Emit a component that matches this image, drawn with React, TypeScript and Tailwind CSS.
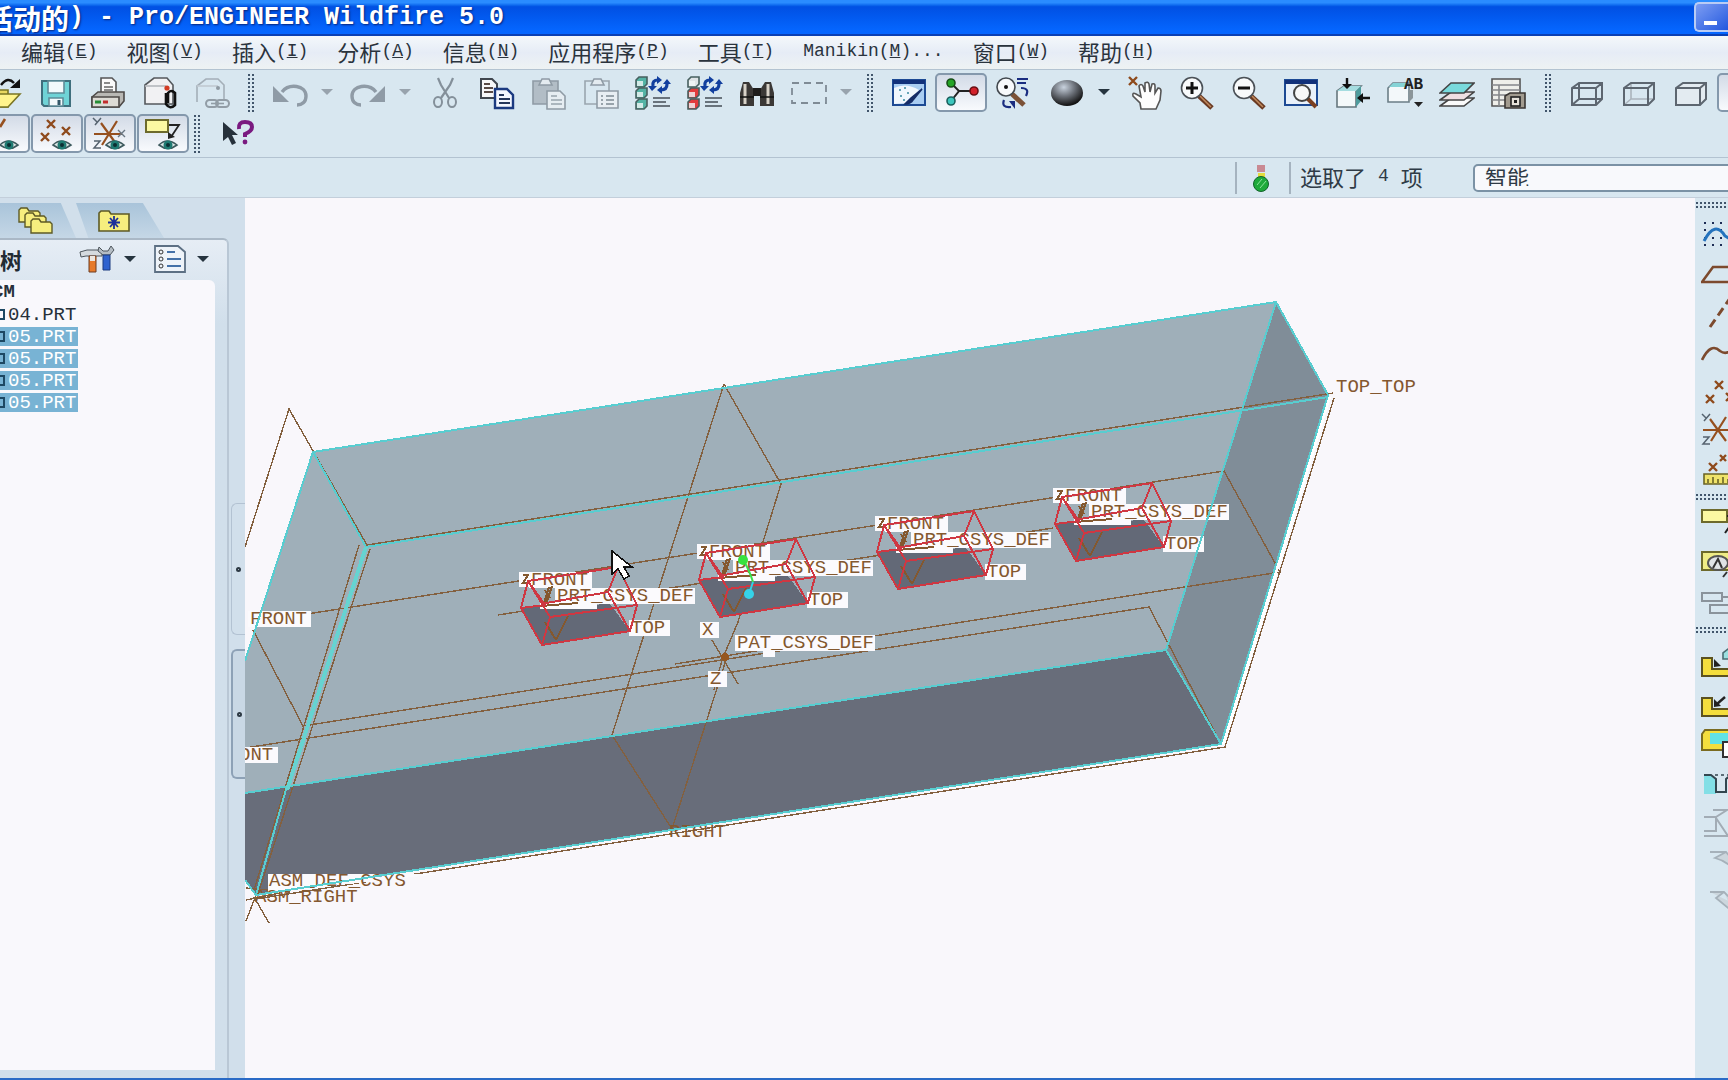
import React from 'react';

const MONO = "font-['Liberation_Mono','Noto_Sans_CJK_SC',monospace]";

/* ---------- shared pieces ---------- */

const Icon: React.FC<{ children: React.ReactNode }> = ({ children }) => (
    <svg viewBox="0 0 36 34" className="w-9 h-[34px] shrink-0" fill="none" strokeWidth="1.6">
        {children}
    </svg>
);

interface ToolProps {
    label: string;
    active?: boolean;
    children: React.ReactNode;
}

const Tool: React.FC<ToolProps> = ({ label, active, children }) => (
    <button
        type="button"
        aria-label={label}
        className={`w-[52px] h-[39px] shrink-0 flex items-center justify-center rounded-[5px] ${active
            ? 'border-2 border-[#8498ac] bg-gradient-to-b from-[#d3dbe7] to-[#f8fafd]'
            : ''
            }`}
    >
        {children}
    </button>
);

const Arrow: React.FC<{ label: string; dark?: boolean }> = ({ label, dark }) => (
    <button type="button" aria-label={label} className="w-[22px] h-[39px] shrink-0 flex items-center justify-center">
        <svg viewBox="0 0 12 7" className="w-3 h-[7px]">
            <path d="M0 0H12L6 6Z" fill={dark ? '#26343f' : '#98a3ad'} />
        </svg>
    </button>
);

const dots = 'bg-[radial-gradient(#41556b_1px,transparent_1px)] bg-[size:4px_4px]';

const Grip: React.FC = () => <div className={`w-2 h-[39px] shrink-0 ${dots}`} />;

const Eye: React.FC = () => (
    <g>
        <path d="M14 28Q22 20 32 28Q23 35 14 28Z" fill="#dce6e6" stroke="#3d5a5e" />
        <circle cx="23" cy="28" r="4.5" fill="#1f7a72" />
        <circle cx="23" cy="28" r="2" fill="#0c2f33" />
    </g>
);

const Cross: React.FC<{ x: number; y: number; r?: number }> = ({ x, y, r = 4 }) => (
    <path d={`M${x - r} ${y - r}l${2 * r} ${2 * r}M${x + r} ${y - r}l${-2 * r} ${2 * r}`} stroke="#8e4a1c" strokeWidth="2.4" />
);

const CsysMark: React.FC = () => (
    <g>
        <path d="M2 17H30M9 6L25 28M25 4L10 28" stroke="#96501f" strokeWidth="2.2" />
        <path d="M1 1L5 5M9 1L3 8M2 24H8L2 31H9" stroke="#56636f" strokeWidth="1.5" />
    </g>
);

const Cubes: React.FC<{ colors: string[] }> = ({ colors }) => (
    <g>
        {colors.map((color, i) => (
            <g key={i} transform={`translate(0 ${i * 11})`}>
                <path d="M1 4L4 1H12V8L9 11H1Z" fill={color} stroke="#47605f" />
                <path d="M2 5H8V10H2Z" fill="#f3f8f8" fillOpacity="0.8" />
            </g>
        ))}
        <path d="M18 10Q17 4 23 4M32 8Q32 14 26 14" stroke="#123f9e" strokeWidth="3.2" />
        <path d="M13 10H22L17 15ZM36 8H28L32 3ZM22 0L27 4L22 8ZM27 10L22 14L27 18Z" fill="#123f9e" />
        <path d="M18 22H35M18 26H31M18 30H35" stroke="#69737c" strokeWidth="1.8" />
    </g>
);

const Lens: React.FC<{ sign: string }> = ({ sign }) => (
    <g>
        <path d="M20 20L33 32" stroke="#6a3a22" strokeWidth="5" />
        <path d="M21 20L32 31" stroke="#c08a5e" strokeWidth="1.5" />
        <circle cx="13" cy="12" r="10.5" fill="#f8fafb" stroke="#4b5157" />
        <path d={sign} stroke="#111" strokeWidth="3" />
    </g>
);

/* ---------- menu ---------- */

const menus = [
    { name: '编辑', key: 'E' },
    { name: '视图', key: 'V' },
    { name: '插入', key: 'I' },
    { name: '分析', key: 'A' },
    { name: '信息', key: 'N' },
    { name: '应用程序', key: 'P' },
    { name: '工具', key: 'T' },
    { name: 'Manikin', key: 'M', tail: '...' },
    { name: '窗口', key: 'W' },
    { name: '帮助', key: 'H' },
];

const MenuBar: React.FC = () => (
    <nav className="h-[34px] pl-[21px] pb-1 flex items-center gap-[29px] whitespace-nowrap bg-gradient-to-b from-[#f4f8fb] via-[#e6ecf6] to-[#eef2f3] border-b border-[#b3c3d1] text-[#2a333d]">
        {menus.map(({ name, key, tail }) => (
            <button key={key} type="button" className="flex items-center leading-6">
                <span className={name === 'Manikin' ? `text-[18px] ${MONO}` : "text-[22px] font-['Noto_Sans_CJK_SC',sans-serif]"}>
                    {name}
                </span>
                <span className={`text-[18px] ${MONO}`}>
                    (<u>{key}</u>){tail}
                </span>
            </button>
        ))}
    </nav>
);

/* ---------- toolbars ---------- */

const FileTools: React.FC = () => (
    <>
        <Tool label="打开">
            <Icon>
                <path d="M0 14H22V31H0Z" fill="#e9d860" stroke="#7a7524" />
                <path d="M2 31L12 18H34L22 31Z" fill="#fff48c" stroke="#7a7524" />
                <path d="M15 9Q22 0 28 7" stroke="#111" strokeWidth="2.4" />
                <path d="M34 3V12H24Z" fill="#111" />
            </Icon>
        </Tool>
        <Tool label="保存">
            <Icon>
                <path d="M4 5H32V30H6L4 28Z" fill="#6fd3d6" stroke="#3f6f7d" strokeWidth="2" />
                <path d="M10 5H26V17H10ZM11 22H25V30H11Z" fill="#f3fafc" stroke="#5f8c98" />
                <path d="M21 24V29" stroke="#33596a" strokeWidth="3" />
            </Icon>
        </Tool>
        <Tool label="打印">
            <Icon>
                <path d="M11 17V2H22L26 6V17Z" fill="#fafafa" stroke="#555" />
                <path d="M14 7H20M14 11H23M14 14H23" stroke="#666" />
                <path d="M2 21L8 16H34V25L29 31H2Z" fill="#b9b8b4" stroke="#4d4947" />
                <path d="M2 21H29V31H2Z" fill="#dddbd5" stroke="#4d4947" />
                <path d="M5 26H11" stroke="#268c35" strokeWidth="3" />
                <path d="M13 26H18" stroke="#c22d2d" strokeWidth="3" />
            </Icon>
        </Tool>
        <Tool label="发送">
            <Icon>
                <path d="M3 28V9L12 2H25L31 9V28Z" fill="#f1f1f3" stroke="#54585c" />
                <path d="M3 10H24" stroke="#b4b8bc" />
                <circle cx="25" cy="12" r="2.6" fill="#d23b24" />
                <path d="M24 17V28Q28 34 33 29V17Q29 13 26 17V27" stroke="#111" strokeWidth="2.6" />
            </Icon>
        </Tool>
        <Tool label="发送链接">
            <Icon>
                <path d="M3 26V10L12 3H24L30 9V23" stroke="#a4afb8" />
                <path d="M3 10H24" stroke="#c1cad1" />
                <circle cx="24" cy="12" r="2" fill="#8f9aa3" />
                <rect x="12" y="24" width="12" height="7" rx="3.5" stroke="#929da6" strokeWidth="2" />
                <rect x="22" y="24" width="13" height="7" rx="3.5" stroke="#929da6" strokeWidth="2" />
                <path d="M17 27.500H30" stroke="#929da6" />
            </Icon>
        </Tool>
    </>
);

const EditTools: React.FC = () => (
    <>
        <Tool label="撤消">
            <Icon>
                <path d="M10 16C17 7 34 9 34 20C34 26 30 29 25 29" stroke="#8f9ba6" strokeWidth="3.4" />
                <path d="M1 10V26H17Z" fill="#8f9ba6" />
            </Icon>
        </Tool>
        <Arrow label="撤消列表" />
        <div className="w-1 shrink-0" />
        <Tool label="重做">
            <Icon>
                <path d="M26 16C19 7 2 9 2 20C2 26 6 29 11 29" stroke="#8f9ba6" strokeWidth="3.4" />
                <path d="M35 10V26H19Z" fill="#8f9ba6" />
            </Icon>
        </Tool>
        <Arrow label="重做列表" />
        <div className="w-[3px] shrink-0" />
        <Tool label="剪切">
            <Icon>
                <path d="M11 2L14 9L22 22M26 2L23 9L14 22" stroke="#84909a" strokeWidth="2.2" />
                <ellipse cx="11" cy="26" rx="4" ry="5" stroke="#84909a" strokeWidth="2" />
                <ellipse cx="25" cy="26" rx="4" ry="5" stroke="#84909a" strokeWidth="2" />
            </Icon>
        </Tool>
        <Tool label="复制">
            <Icon>
                <path d="M2 3H13L18 8V22H2Z" fill="#f7f7f8" stroke="#40464e" strokeWidth="2" />
                <path d="M5 8H11M5 12H14M5 16H14" stroke="#594a45" strokeWidth="2" />
                <path d="M16 13H28L34 19V32H16Z" fill="#f4f7ff" stroke="#1b3a80" strokeWidth="2.4" />
                <path d="M20 19H25M20 23H31M20 27H31" stroke="#26375c" strokeWidth="2" />
            </Icon>
        </Tool>
        <Tool label="粘贴">
            <Icon>
                <path d="M2 5H27V28H2Z" fill="#b2bdc6" stroke="#8f9ba5" />
                <path d="M8 9L11 3H18L21 9Z" fill="#e4ebf0" stroke="#8f9ba5" />
                <path d="M16 15H29L34 20V33H16Z" fill="#e6edf2" stroke="#8f9ba5" />
                <path d="M20 20H26M20 24H31M20 28H31" stroke="#98a4ad" />
            </Icon>
        </Tool>
        <Tool label="选择性粘贴">
            <Icon>
                <path d="M2 5H26V28H2Z" stroke="#9aa6af" />
                <path d="M8 9L11 3H18L21 9Z" fill="#e4ebf0" stroke="#8f9ba5" />
                <path d="M14 15H35V32H14Z" fill="#e8eef3" stroke="#8f9ba5" />
                <path d="M18 20H20M18 24H20M18 28H20M23 20H31M23 24H31M23 28H31" stroke="#7d8a94" />
            </Icon>
        </Tool>
        <Tool label="再生">
            <Icon>
                <Cubes colors={['#54b3a5', '#54b3a5', '#54b3a5']} />
            </Icon>
        </Tool>
        <Tool label="再生管理器">
            <Icon>
                <Cubes colors={['#dfe4e6', '#e33c3c', '#e33c3c']} />
            </Icon>
        </Tool>
        <Tool label="查找">
            <Icon>
                <path d="M4 6H10L15 14V30H1V17Z" fill="#3b3836" />
                <path d="M32 6H26L21 14V30H35V17Z" fill="#3b3836" />
                <path d="M14 12H22V20H14Z" fill="#1f1d1c" />
                <path d="M6 8V28M29 8V28" stroke="#d8d2c8" strokeWidth="3" />
                <path d="M1 21H15M21 21H35" stroke="#111" />
            </Icon>
        </Tool>
        <Tool label="选取框">
            <Icon>
                <rect x="1" y="7" width="34" height="20" stroke="#7f8b95" strokeWidth="1.8" strokeDasharray="7 5" />
            </Icon>
        </Tool>
        <Arrow label="选取选项" />
    </>
);

const ViewTools: React.FC = () => (
    <>
        <Tool label="重画">
            <Icon>
                <rect x="2" y="4" width="32" height="25" fill="#a9cdf2" stroke="#1d4a94" strokeWidth="2" />
                <path d="M2 4H34V8H2Z" fill="#12317a" />
                <path d="M3 12Q15 6 28 14L17 27L3 28Z" fill="#f1f7fd" />
                <path d="M31 13L20 22L14 28Q20 28 22 24Z" fill="#152c66" stroke="#152c66" />
                <path d="M8 14H10M13 12H15M9 20H11M16 17H18M12 24H14" stroke="#3a8ba0" />
            </Icon>
        </Tool>
        <Tool label="旋转中心" active>
            <Icon>
                <path d="M8 7L16 15L8 25M16 15H30" stroke="#222" strokeWidth="2" />
                <circle cx="8" cy="7" r="4" fill="#24a526" stroke="#174f18" />
                <circle cx="8" cy="25" r="4" fill="#3cc6bd" stroke="#1b5f5d" />
                <circle cx="31" cy="15" r="4" fill="#d3202a" stroke="#6b1014" />
            </Icon>
        </Tool>
        <Tool label="定向模式">
            <Icon>
                <path d="M17 18L29 29" stroke="#7b5136" strokeWidth="5" />
                <circle cx="11" cy="11" r="9" fill="#f7f9fb" stroke="#43494f" />
                <circle cx="11" cy="11" r="2" fill="#111" />
                <path d="M22 3H33M22 7H31M26 12Q35 12 31 20M9 24Q6 32 16 31" stroke="#1a2d80" strokeWidth="2.2" />
                <path d="M14 25H20V33Z" fill="#1a2d80" />
            </Icon>
        </Tool>
        <div className="w-[2px] shrink-0" />
        <Tool label="外观库">
            <Icon>
                <defs>
                    <radialGradient id="ball" cx="0.4" cy="0.28" r="0.7">
                        <stop offset="0" stopColor="#c9d3df" />
                        <stop offset="0.5" stopColor="#6b7078" />
                        <stop offset="1" stopColor="#141414" />
                    </radialGradient>
                </defs>
                <ellipse cx="18" cy="17" rx="16" ry="13" fill="url(#ball)" />
            </Icon>
        </Tool>
        <Arrow label="外观选项" dark />
        <div className="w-1 shrink-0" />
        <Tool label="平移">
            <Icon>
                <Cross x={6} y={5} />
                <path d="M14 33L13 27L6 20Q5 16 9 18L14 21L12 10Q14 7 16 10L18 16L18 7Q21 5 22 8L23 16L25 8Q28 7 28 10L28 17L31 12Q34 12 34 15L33 24L29 33Z" fill="#fdfdfd" stroke="#555" />
            </Icon>
        </Tool>
        <Tool label="放大">
            <Icon>
                <Lens sign="M7 12H19M13 6V18" />
            </Icon>
        </Tool>
        <Tool label="缩小">
            <Icon>
                <Lens sign="M7 12H19" />
            </Icon>
        </Tool>
        <Tool label="重新调整">
            <Icon>
                <rect x="2" y="4" width="32" height="25" fill="#e9f1fa" stroke="#1d4a94" strokeWidth="2" />
                <path d="M2 4H34V8H2Z" fill="#12317a" />
                <path d="M24 22L33 31" stroke="#7b4020" strokeWidth="4" />
                <circle cx="19" cy="17" r="8" fill="#f8f8f8" stroke="#444" strokeWidth="2" />
            </Icon>
        </Tool>
        <Tool label="重定向">
            <Icon>
                <path d="M2 15L9 10H26L21 15V31H2Z" fill="#f4f9fa" stroke="#66777d" />
                <path d="M2 15L9 10H26L21 15Z" fill="#a5dde0" />
                <path d="M21 15L26 10V25L21 31Z" fill="#4f9c9d" />
                <path d="M12 2V9M35 22H26" stroke="#111" strokeWidth="2.4" />
                <path d="M7 8H17L12 13ZM28 17V27L22 22Z" fill="#111" />
            </Icon>
        </Tool>
        <Tool label="已命名视图">
            <Icon>
                <path d="M1 12L6 7H22V26H1Z" fill="#f3f8fa" stroke="#6b7e87" />
                <path d="M2 11L6 7H19V11Z" fill="#85d3d6" />
                <path d="M22 14H26V22L22 26Z" fill="#8a9599" />
                <text x="17" y="13" fontSize="16" fontWeight="bold" fill="#222" className={MONO}>AB</text>
                <path d="M27 26H36L31.500 31Z" fill="#222" />
            </Icon>
        </Tool>
        <Tool label="层">
            <Icon>
                <path d="M1 30L12 22H35L25 30Z" fill="#fafafa" stroke="#444" />
                <path d="M1 24L12 16H35L25 24Z" fill="#efe0e2" stroke="#444" />
                <path d="M1 17L12 7H35L25 17Z" fill="#79dadc" stroke="#444" />
            </Icon>
        </Tool>
        <Tool label="视图管理器">
            <Icon>
                <path d="M1 3H29V30H1Z" fill="#efefea" stroke="#555" />
                <path d="M1 9H29M1 14H29M1 19H29M1 24H20M8 9V30" stroke="#85878a" />
                <path d="M14 20L19 17H34V32H14Z" fill="#a29b8f" stroke="#3a3633" />
                <rect x="20" y="21" width="9" height="9" fill="#e6e2da" stroke="#222" />
                <rect x="23" y="24" width="3" height="3" fill="#222" />
            </Icon>
        </Tool>
    </>
);

const DisplayTools: React.FC = () => (
    <>
        <Tool label="线框">
            <Icon>
                <path d="M3 12L10 7H33V23L27 29H3ZM3 12H27V29M27 12L33 7M10 7V23H33M10 23L3 29" stroke="#5d6670" strokeWidth="2" />
            </Icon>
        </Tool>
        <Tool label="隐藏线">
            <Icon>
                <path d="M10 7V23H33M10 23L3 29" stroke="#abb4bc" />
                <path d="M3 12L10 7H33V23L27 29H3ZM3 12H27V29M27 12L33 7" stroke="#5d6670" strokeWidth="2" />
            </Icon>
        </Tool>
        <Tool label="消隐">
            <Icon>
                <path d="M3 12L10 7H33V23L27 29H3ZM3 12H27V29M27 12L33 7" fill="#e3ebf1" stroke="#5d6670" strokeWidth="2" />
            </Icon>
        </Tool>
        <Tool label="着色" active>
            <Icon>
                <path d="M3 12L10 7H33V23L27 30H3Z" fill="#8c9aa8" />
            </Icon>
        </Tool>
    </>
);

const Toolbars: React.FC = () => (
    <div className="h-[88px] pt-[3px] border-b border-[#b3c3d1] flex flex-col gap-[2px]">
        <div className="flex -ml-[22px]">
            <FileTools />
            <div className="w-[22px] shrink-0 flex justify-center pl-1"><Grip /></div>
            <div className="w-1 shrink-0" />
            <EditTools />
            <div className="w-[26px] shrink-0 flex justify-center"><Grip /></div>
            <ViewTools />
            <div className="w-[26px] shrink-0 flex justify-center"><Grip /></div>
            <DisplayTools />
        </div>
        <div className="flex gap-px -ml-[22px]">
            <Tool label="基准轴显示" active>
                <Icon>
                    <path d="M19 2L14 10M12 14L8 21" stroke="#96501f" strokeWidth="2.6" />
                    <Eye />
                </Icon>
            </Tool>
            <Tool label="基准点显示" active>
                <Icon>
                    <Cross x={12} y={7} />
                    <Cross x={27} y={14} />
                    <Cross x={6} y={20} />
                    <Eye />
                </Icon>
            </Tool>
            <Tool label="坐标系显示" active>
                <Icon>
                    <CsysMark />
                    <path d="M26 13L33 20M33 13L26 20" stroke="#697682" strokeWidth="1.4" />
                    <Eye />
                </Icon>
            </Tool>
            <Tool label="注释显示" active>
                <Icon>
                    <rect x="1" y="3" width="22" height="12" fill="#fbf8a2" stroke="#6d6a2c" strokeWidth="2" />
                    <path d="M24 8H34L26 20" stroke="#222" strokeWidth="1.8" />
                    <path d="M23 22V15L30 20Z" fill="#222" />
                    <Eye />
                </Icon>
            </Tool>
            <div className="w-[11px] shrink-0 flex justify-end"><Grip /></div>
            <div className="w-2 shrink-0" />
            <Tool label="帮助">
                <Icon>
                    <path d="M4 5V24L9 20L13 28L17 26L13 18H19Z" fill="#26313b" />
                    <path d="M20 12Q19 5 26 5Q33 5 33 10Q33 14 26 17V20" stroke="#7a1a80" strokeWidth="4" />
                    <circle cx="26" cy="25" r="2.4" fill="#7a1a80" />
                </Icon>
            </Tool>
        </div>
    </div>
);

const StatusBar: React.FC = () => (
    <div className="h-10 border-b border-[#c3cfdb] flex justify-end items-center text-[#2f3b46] text-[22px] leading-6">
        <div className="w-[54px] h-8 shrink-0 border-l-2 border-[#a5b3bf] pr-1 flex items-center justify-center">
            <svg viewBox="0 0 18 28" className="w-[18px] h-7">
                <rect x="5" y="1" width="8" height="7" fill="#c98a93" />
                <rect x="6" y="9" width="7" height="5" fill="#e5dc3f" />
                <circle cx="9" cy="20" r="7.500" fill="#1faa3a" stroke="#12632a" />
                <path d="M5 21L10 15M8 24L14 17" stroke="#8be39a" />
            </svg>
        </div>
        <p className="w-[184px] h-8 shrink-0 border-l-2 border-[#a5b3bf] pl-[9px] pb-1 flex items-center gap-3 whitespace-nowrap font-['Noto_Sans_CJK_SC',sans-serif]">
            选取了 <span className={`text-[18px] ${MONO}`}>4</span> 项
        </p>
        <select
            aria-label="选取过滤器"
            className="w-[300px] -mr-[45px] h-[28px] shrink-0 appearance-none rounded-[5px] border-2 border-[#7b92a5] bg-[#f8f9fc] pl-[10px] pb-1 leading-5 font-['Noto_Sans_CJK_SC',sans-serif]"
        >
            <option>智能</option>
        </select>
    </div>
);

/* ---------- model tree ---------- */

const FolderShape: React.FC<{ x: number; y: number }> = ({ x, y }) => (
    <path d={`M${x} ${y + 14}V${y + 2}l2 -2h6l2 3h9l2 2v9Z`} fill="#f6ee7e" stroke="#5d5a26" strokeWidth="1.4" />
);

const tree = [
    { name: '04.PRT', selected: false },
    { name: '05.PRT', selected: true },
    { name: '05.PRT', selected: true },
    { name: '05.PRT', selected: true },
    { name: '05.PRT', selected: true },
];

const SidePanel: React.FC = () => (
    <aside className="w-[245px] shrink-0 flex bg-[#d1dfeb]">
        <div className="flex-1 flex flex-col pt-[5px]">
            <div className="flex h-[35px]">
                <button type="button" aria-label="文件夹浏览器" className="w-[76px] flex items-center justify-center pr-1 bg-gradient-to-b from-[#a9c4da] to-[#c5d7e6] [clip-path:polygon(0_0,80%_0,100%_100%,0_100%)]">
                    <svg viewBox="0 0 36 28" className="w-9 h-7">
                        <FolderShape x={1} y={1} />
                        <FolderShape x={7} y={6} />
                        <FolderShape x={13} y={12} />
                    </svg>
                </button>
                <button type="button" aria-label="收藏夹" className="w-[88px] flex items-center justify-center pr-3 bg-gradient-to-b from-[#a9c4da] to-[#c5d7e6] [clip-path:polygon(0_0,76%_0,100%_100%,14%_100%)]">
                    <svg viewBox="0 0 34 24" className="w-[34px] h-6">
                        <path d="M2 22V4L4 2H12L14 5H32V22Z" fill="#f6ee7e" stroke="#5d5a26" strokeWidth="1.6" />
                        <path d="M17 7V20M11 13.500H23M13 9L21 18M21 9L13 18" stroke="#1d2f9a" strokeWidth="1.8" />
                    </svg>
                </button>
            </div>
            <div className="flex-1 flex flex-col mr-[2px] rounded-tr-md border-t-2 border-r-2 border-t-[#aab8c6] border-r-[#b9c7d5] pr-3 pb-2 bg-gradient-to-b from-[#e6edf5] to-[#d1dfeb] to-10%">
                <div className="h-10 pb-[2px] flex items-center">
                    <h2 className="w-[79px] text-[22px] leading-6 font-bold text-[#222b33] font-['Noto_Sans_CJK_SC',sans-serif]">树</h2>
                    <button type="button" aria-label="设置" className="w-9 shrink-0">
                        <svg viewBox="0 0 36 30" className="w-9 h-[30px]" fill="none">
                            <path d="M1 8L8 6H20L23 8V12H7L2 13Z" fill="#d5dade" stroke="#4d555c" />
                            <path d="M10 12H17V28H10Z" fill="#e77b2b" stroke="#6d3c22" />
                            <path d="M11 12H16V17H11Z" fill="#ece6df" />
                            <path d="M20 3L24 7H29L32 2L35 6L31 11H24L19 7Z" fill="#b5bdc4" stroke="#4d555c" />
                            <path d="M24 11H31V26H24Z" fill="#2f63cf" stroke="#1c3c80" />
                        </svg>
                    </button>
                    <div className="w-1 shrink-0" />
                    <Arrow label="设置列表" dark />
                    <button type="button" aria-label="显示" className="w-[32px] ml-[13px] shrink-0">
                        <svg viewBox="0 0 32 28" className="w-8 h-7" fill="none">
                            <path d="M1 1H24L31 7V27H1Z" fill="#eef3f9" stroke="#5d7084" strokeWidth="1.8" />
                            <path d="M13 7H21M13 14H27M13 21H27" stroke="#4471a8" strokeWidth="1.8" />
                            <circle cx="7" cy="7" r="2" stroke="#333" />
                            <circle cx="7" cy="14" r="2" stroke="#333" />
                            <circle cx="7" cy="21" r="2" stroke="#333" />
                        </svg>
                    </button>
                    <div className="w-[6px] shrink-0" />
                    <Arrow label="显示列表" dark />
                </div>
                <ul className={`flex-1 flex flex-col items-start gap-[3px] pt-[2px] rounded-tr-md bg-[#f9f8fc] text-[19px] leading-5 text-[#27303a] ${MONO}`}>
                    <li className="h-5 font-bold -ml-2">CM</li>
                    {tree.map(({ name, selected }, i) => (
                        <li key={i} className={`h-[19px] pr-[2px] flex items-center gap-[3px] ${selected ? 'bg-[#78b3d4] text-white' : ''}`}>
                            <span className="w-[5px] h-[11px] border-2 border-l-0 border-[#1d4863]" />
                            {name}
                        </li>
                    ))}
                </ul>
            </div>
        </div>
        <div className="w-[14px] shrink-0 pt-[305px] flex flex-col gap-[14px]">
            <button type="button" aria-label="折叠浏览器" className="h-[132px] rounded-l-md border border-r-0 border-[#b3c2d2] flex items-center justify-center">
                <span className="w-[5px] h-[5px] rounded-full border-2 border-[#2d3944]" />
            </button>
            <button type="button" aria-label="折叠导航器" className="h-[130px] rounded-l-md border-2 border-r-0 border-[#8da1b6] bg-[#c9d8e5] flex items-center justify-center">
                <span className="w-[5px] h-[5px] rounded-full border-2 border-[#2d3944]" />
            </button>
        </div>
    </aside>
);

/* ---------- model view ---------- */

interface TagProps {
    x: number;
    y: number;
    text: string;
    plain?: boolean;
}

// x / y is the left end and the middle of the label
const Tag: React.FC<TagProps> = ({ x, y, text, plain }) => (
    <g>
        {!plain && <rect x={x - 3} y={y - 8} width={text.length * 11 + 8} height="16" fill="#fbfafd" />}
        <text x={x - 1} y={y + 5} fontSize="19" fill="#84582f" className={MONO}>{text}</text>
    </g>
);

const Block: React.FC<{ dx: number; dy: number }> = ({ dx, dy }) => (
    <g transform={`translate(${dx} ${dy})`}>
        <path d="M521 608L610 604L630 631L542 645Z" fill="#636977" />
        <path d="M519 572H533V587H519ZM540 602H597V609H540Z" fill="#fbfafd" />
        <Tag x={532} y={580} text="FRONT" />
        <Tag x={558} y={596} text="PRT_CSYS_DEF" />
        <Tag x={632} y={628} text="TOP" />
        <path d="M523 575H528L523 583H529M545 590L550 598M552 586L546 604M541 606L578 603M549 587L543 607M556 640L568 616M545 622L556 640" stroke="#84582f" strokeWidth="2" />
        <path
            d="M528 581L521 608L542 645L630 631L637 605L618 567ZM528 581L550 617L542 645M550 617L637 605M618 567L608 592L630 631M541 604L608 592M531 585L545 605L521 608"
            stroke="#cf3742"
            strokeWidth="2"
        />
    </g>
);

const ModelView: React.FC = () => (
    <main className="flex-1 min-w-0 overflow-hidden bg-[#f9f7fb]">
        <svg className="w-full h-full" fill="none" role="img" aria-label="装配模型">
            <g transform="translate(-245 -198)" shapeRendering="crispEdges">
                {/* faces */}
                <path d="M245 661L313 452L1276 302L1166 650L245 793Z" fill="#9fafb9" />
                <path d="M1276 302L1328 395L1221 744L1166 650Z" fill="#808d98" />
                <path d="M245 793L1166 650L1221 744L256 895L245 880Z" fill="#686d7a" />

                {/* datum planes */}
                <g stroke="#83603f" strokeWidth="1.4">
                    <path d="M245 547L289 409L367 545L1333 393M1334 398L1225 747L256 899" />
                    <path d="M359 545L254 890M370 549L258 894" />
                    <path d="M307 614L1224 471L1280 572L303 726L253 630" />
                    <path d="M498 615L1053 528" />
                    <path d="M245 748L1149 607L1221 744" />
                    <path d="M724 384L781 484L738 622M726 660L672 829L612 735L724 384" />
                    <path d="M675 664L762 650M712 640L738 684M738 622L722 660L714 690" />
                    <path d="M254 897L269 923M256 895L246 921M246 888L290 892M246 900L280 893" />
                </g>
                <circle cx="725" cy="657" r="4" fill="#96571f" />

                {/* labels */}
                <Tag x={251} y={619} text="FRONT" />
                <Tag x={240} y={755} text="ONT" />
                <Tag x={738} y={643} text="PAT_CSYS_DEF" />
                <path d="M763 650H775V657H763Z" fill="#fbfafd" />
                <Tag x={703} y={630} text="X" />
                <Tag x={711} y={679} text="Z" />
                <path d="M268 874H440L268 893Z" fill="#fbfafd" />
                <Tag x={270} y={881} text="ASM_DEF_CSYS" plain />
                <Tag x={256} y={897} text="ASM_RIGHT" plain />
                <Tag x={670} y={832} text="RIGHT" plain />
                <Tag x={1337} y={387} text="TOP_TOP" plain />

                <Block dx={0} dy={0} />
                <Block dx={178} dy={-28} />
                <Block dx={356} dy={-56} />
                <Block dx={534} dy={-84} />

                {/* solid edges */}
                <path d="M1329 397L1223 744" stroke="#ffffff" strokeWidth="4" />
                <g stroke="#58cdd0" strokeWidth="2">
                    <path d="M245 661L313 452L1276 302L1328 395L1221 744L256 895L245 880" />
                    <path d="M313 452L366 547L1328 397" />
                    <path d="M1276 302L1166 650L1221 744M1166 650L245 793" />
                    <path d="M287 786L256 895" />
                </g>
                <path d="M366 547L287 790" stroke="#66d3d1" strokeWidth="4" />

                {/* spin centre */}
                <g shapeRendering="auto">
                    <path d="M743 559Q750 572 753 582" stroke="#3be04a" strokeWidth="2" />
                    <path d="M753 582L749 594" stroke="#2fd3e6" strokeWidth="2" />
                    <circle cx="743" cy="560" r="5" fill="#38e23e" />
                    <circle cx="749" cy="594" r="5" fill="#35d3e8" />
                </g>

                {/* mouse pointer */}
                <path d="M612 551V574L618 569L624 579L629 576L624 567H632Z" fill="#fff" stroke="#111" strokeWidth="1.6" />
            </g>
        </svg>
    </main>
);

/* ---------- feature toolbar on the right ---------- */

const SideTool: React.FC<{ label: string; children: React.ReactNode }> = ({ label, children }) => (
    <button type="button" aria-label={label} className="w-11 h-[39px] shrink-0 flex items-center pl-[6px]">
        <Icon>{children}</Icon>
    </button>
);

const SideGrip: React.FC = () => <div className={`h-2 w-full shrink-0 ${dots}`} />;

const FeatureBar: React.FC = () => (
    <div className="w-[33px] shrink-0 overflow-hidden bg-[#d8e7f0] pt-[3px] flex flex-col">
        <SideGrip />
        <div className="pt-[6px] pb-[5px] flex flex-col">
            <SideTool label="草绘">
                <path d="M3 5H36M3 12H36M3 20H36M3 27H36" stroke="#1d2c55" strokeWidth="2" strokeDasharray="2 6" />
                <path d="M3 23Q14 2 24 18L34 24" stroke="#2573bd" strokeWidth="3" />
            </SideTool>
            <SideTool label="基准平面">
                <path d="M12 10H40L29 25H1Z" stroke="#7c4a2e" strokeWidth="2.6" />
            </SideTool>
            <SideTool label="基准轴">
                <path d="M9 31L32 -2" stroke="#7c4a2e" strokeWidth="3" strokeDasharray="9 5" />
            </SideTool>
            <SideTool label="基准曲线">
                <path d="M1 25Q10 7 19 16Q26 21 34 12" stroke="#7c4a2e" strokeWidth="2.6" />
            </SideTool>
            <SideTool label="基准点">
                <Cross x={18} y={11} />
                <Cross x={9} y={25} />
                <Cross x={29} y={23} />
            </SideTool>
            <SideTool label="坐标系">
                <CsysMark />
            </SideTool>
            <SideTool label="分析">
                <Cross x={12} y={15} />
                <Cross x={22} y={6} r={3} />
                <path d="M3 22H36V32H3Z" fill="#efe36a" stroke="#6a6426" />
                <path d="M7 31V27M12 31V25M17 31V27M22 31V25M27 31V27" stroke="#6a6426" />
            </SideTool>
        </div>
        <SideGrip />
        <div className="pb-[6px] flex flex-col gap-px">
            <SideTool label="注释">
                <rect x="1" y="6" width="25" height="12" fill="#fbf8a2" stroke="#6d6a2c" strokeWidth="2" />
                <path d="M26 12H36L24 29" stroke="#222" strokeWidth="2" />
            </SideTool>
            <SideTool label="注释特征">
                <rect x="1" y="8" width="27" height="18" fill="#efec86" stroke="#6d6a2c" strokeWidth="2" />
                <ellipse cx="17" cy="19" rx="10" ry="7" fill="#dfe3e6" stroke="#555" strokeWidth="2" />
                <path d="M12 24L17 15L21 24M22 33L26 28" stroke="#333" strokeWidth="2" />
            </SideTool>
            <SideTool label="传播">
                <path d="M1 9H21V17H1ZM9 21H30V29H9ZM21 13H34" stroke="#8a939b" strokeWidth="2" />
            </SideTool>
        </div>
        <SideGrip />
        <div className="pt-2 flex flex-col gap-px">
            <SideTool label="装配">
                <path d="M1 31V13H11V24H36V31Z" fill="#f4de3d" stroke="#5b5220" strokeWidth="2" />
                <path d="M22 14V8L27 4H36V14Z" fill="#9be0e0" stroke="#4a6d73" />
                <path d="M13 22V14L20 21Z" fill="#222" />
            </SideTool>
            <SideTool label="创建">
                <path d="M1 31V13H11V24H36V31Z" fill="#f4de3d" stroke="#5b5220" strokeWidth="2" />
                <path d="M24 12L16 19" stroke="#222" strokeWidth="2.400" />
                <path d="M13 22V14L20 21Z" fill="#222" />
            </SideTool>
            <SideTool label="元件">
                <path d="M1 9L4 5H36V25H1Z" fill="#f4de3d" stroke="#7a6b20" strokeWidth="2" />
                <path d="M9 8H36V19H9Z" fill="#62e2e6" />
                <path d="M22 17H36V32H22Z" fill="#fff" stroke="#333" strokeWidth="2" />
            </SideTool>
            <SideTool label="孔">
                <path d="M3 10H10L15 14V29H3Z" fill="#83dfe6" />
                <path d="M3 10H10L15 14V27H25V14L30 10" stroke="#33464f" strokeWidth="2" />
                <path d="M14 10H28" stroke="#33464f" strokeDasharray="3 3" />
            </SideTool>
            <SideTool label="拉伸">
                <path d="M3 12H15V26H3M15 12L26 5H12M3 31H36M15 13L27 31" stroke="#a2acb5" strokeWidth="2" />
            </SideTool>
            <SideTool label="扫描">
                <path d="M9 7H25L34 18V26Q26 16 14 13L25 7" fill="#ccd6dd" stroke="#a6b1ba" strokeWidth="1.8" />
            </SideTool>
            <SideTool label="倒角">
                <path d="M9 7H23L36 20M23 7L15 13L32 27" fill="#ccd6dd" stroke="#a6b1ba" strokeWidth="1.8" />
            </SideTool>
        </div>
    </div>
);

const App: React.FC = () => (
    <div className="h-screen flex flex-col overflow-hidden bg-[#d8e7f0]">
        <header className="h-9 shrink-0 flex items-center justify-between bg-gradient-to-b from-[#2a8cff] from-8% via-[#0150e3] via-20% to-[#0566ff] to-90% border-b-2 border-[#0a40b4]">
            <h1 className="-ml-[15px] pt-[2px] flex items-center whitespace-nowrap font-bold text-white [text-shadow:1px_1px_2px_#06247a]">
                <span className="text-[28px] leading-7 font-['Noto_Sans_CJK_SC',sans-serif]">活动的</span>
                <span className="text-[25px] leading-7 whitespace-pre font-['Liberation_Mono',monospace]">{') - Pro/ENGINEER Wildfire 5.0'}</span>
            </h1>
            <button type="button" aria-label="最小化" className="w-[34px] h-[30px] shrink-0 rounded-l-[5px] border-2 border-r-0 border-[#b9ccf5] bg-gradient-to-br from-[#7d9cf2] to-[#2256de] flex items-end pl-2 pb-[5px]">
                <span className="w-[13px] h-1 bg-white" />
            </button>
        </header>
        <MenuBar />
        <Toolbars />
        <StatusBar />
        <div className="flex-1 min-h-0 flex border-b-2 border-[#2b6bc6]">
            <SidePanel />
            <ModelView />
            <FeatureBar />
        </div>
    </div>
);

export default App;
